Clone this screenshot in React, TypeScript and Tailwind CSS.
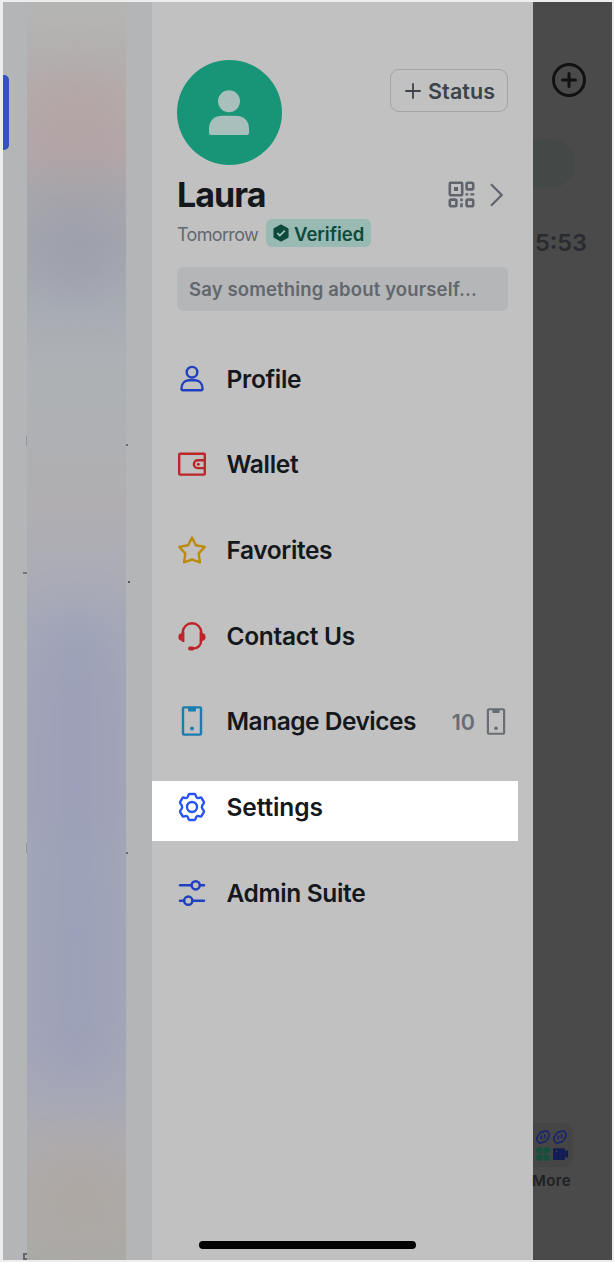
import React from "react";
import clsx from "clsx";

const ProfileIcon = () => (
    <svg className="h-[30px] w-[30px] text-[#1f40c0]" viewBox="0 0 30 30" fill="none" stroke="currentColor" strokeWidth="2.4" strokeLinejoin="round">
        <circle cx="15" cy="8.2" r="5.3" />
        <path d="M4.500 24.800c0-5 2.800-8.500 7.500-8.500h6c4.700 0 7.500 3.500 7.500 8.500 0 1-.4 1.400-1.400 1.400H5.900c-1 0-1.400-.4-1.400-1.400Z" />
    </svg>
);

const WalletIcon = () => (
    <svg className="h-[30px] w-[30px] text-[#bd2529]" viewBox="0 0 30 30" fill="none" stroke="currentColor" strokeWidth="2.4" strokeLinejoin="round">
        <rect x="2.200" y="4.800" width="25.600" height="20.800" rx="0.8" />
        <path d="M27.800 11.300h-7a3.900 3.900 0 0 0 0 7.800h7" />
        <circle cx="21.300" cy="15.200" r="1.500" fill="currentColor" stroke="none" />
    </svg>
);

const StarIcon = () => (
    <svg className="h-[30px] w-[30px] text-[#bd8a0b]" viewBox="0 0 30 30" fill="none" stroke="currentColor" strokeWidth="2.4" strokeLinejoin="round">
        <path d="m15 2.600 3.900 7.600 8.900 1.700-6.100 6.500 1.200 8.900L15 24.500l-7.900 2.800 1.200-8.900-6.100-6.500 8.900-1.700L15 2.600Z" />
    </svg>
);

const HeadsetIcon = () => (
    <svg className="h-[30px] w-[30px] text-[#bd2529]" viewBox="0 0 30 30" fill="none" stroke="currentColor" strokeWidth="2.4">
        <path d="M5.700 19V11.600a9.300 9.300 0 0 1 18.600 0V18.500c0 5.500-3.300 9-8.300 9.100" />
        <path d="M7.400 11H5.800C5 11 4.700 11.500 4.700 12.300c-1.900.2-3.300.8-3.300 3.700s1.400 3.500 3.300 3.700c0 .8.300 1.300 1.100 1.300h1.600ZM22.600 11h1.600c.8 0 1.100.5 1.100 1.300 1.900.2 3.300.8 3.300 3.700s-1.400 3.500-3.300 3.700c0 .8-.3 1.300-1.100 1.300h-1.600Z" fill="currentColor" stroke="none" />
        <path d="M13 27.500h2.500" strokeWidth="3.800" strokeLinecap="round" />
    </svg>
);

const PhoneIcon = ({ className }: { className: string }) => (
    <svg className={className} viewBox="0 0 22 30" fill="none" stroke="currentColor" strokeWidth="2.4">
        <rect x="2" y="1.400" width="18" height="27.200" rx="1" />
        <path d="M7 1.500h8v3.300a.8.8 0 0 1-.8.8H7.800a.8.8 0 0 1-.8-.8Z" fill="currentColor" stroke="none" />
        <circle cx="11" cy="22.600" r="2" fill="currentColor" stroke="none" />
    </svg>
);

const GearIcon = () => (
    <svg className="h-[30px] w-[30px] text-[#2553f5]" viewBox="0 0 30 30" fill="none" stroke="currentColor" strokeWidth="2.4" strokeLinejoin="round">
        <path d="M12.700 2h4.600c.8 0 1.200.4 1.300 1.100.4 2.700 1.800 3.500 4.200 2.500.8-.4 1.400-.2 1.800.5l2.200 3.800c.4.7.3 1.300-.3 1.800-2.200 1.700-2.200 4.900 0 6.600.6.500.7 1.100.3 1.800l-2.200 3.800c-.4.7-1 .9-1.800.5-2.400-1-3.800-.2-4.200 2.500-.1.700-.5 1.100-1.300 1.100h-4.600c-.8 0-1.200-.4-1.300-1.100-.4-2.700-1.800-3.500-4.200-2.500-.8.4-1.400.2-1.800-.5l-2.200-3.800c-.4-.7-.3-1.300.3-1.800 2.200-1.700 2.200-4.900 0-6.600-.6-.5-.7-1.100-.3-1.800l2.200-3.800c.4-.7 1-.9 1.800-.5 2.400 1 3.800.2 4.200-2.500.1-.7.5-1.100 1.300-1.100Z" />
        <circle cx="15" cy="15" r="5" />
    </svg>
);

const SlidersIcon = () => (
    <svg className="h-[30px] w-[30px] text-[#1f40c0]" viewBox="0 0 30 30" fill="none" stroke="currentColor" strokeWidth="2.5" strokeLinecap="round">
        <path d="M3 7.300h11.500M23 7.300h4M3 22.700h4M15.500 22.700H27" />
        <circle cx="18.700" cy="7.300" r="4.100" />
        <circle cx="11.300" cy="22.700" r="4.100" />
    </svg>
);

const QrIcon = () => (
    <svg className="h-[27px] w-[27px] text-[#60656d]" viewBox="0 0 27 27" fill="none" stroke="currentColor" strokeWidth="2.6">
        <rect x="1.800" y="1.800" width="12.400" height="12.400" rx="1" />
        <rect x="18.600" y="1.800" width="6.600" height="6.600" rx="1.500" />
        <rect x="1.800" y="18.600" width="6.600" height="6.600" rx="1.500" />
        <rect x="18.600" y="18.600" width="6.600" height="6.600" rx="1.500" />
        <path d="M6 6h4v4H6ZM17.500 12.200h2.800v2.400h-2.800ZM22.300 12.200h4v2.400h-4ZM12.200 17.500h2.600v2.800h-2.600ZM12.200 22.300h2.600v4h-2.600Z" fill="currentColor" stroke="none" />
    </svg>
);

const LinkIcon = () => (
    <svg className="h-[14px] w-[14px] text-[#17256f]" viewBox="0 0 14 14" fill="none" stroke="currentColor" strokeWidth="1.600">
        <path d="M6.600 12.400c-2 1.100-4.200.5-5.200-1.300-.8-1.300-.8-2.700 0-4.100L2.900 4.300C4 2.300 6 1.400 7.900 2.300" />
        <path d="M7.400 1.600c2-1.100 4.200-.5 5.200 1.300.8 1.300.8 2.700 0 4.100l-1.500 2.700c-1.100 2-3.100 2.900-5 2" />
        <path d="M6 9.300c-1.500-1-1.200-2.400.2-3.600M8 4.700c1.500 1 1.200 2.400-.2 3.600" strokeWidth="1.600" />
    </svg>
);

const items = [
    { title: "Profile", icon: <ProfileIcon />, tracking: "tracking-[-0.3px]" },
    { title: "Wallet", icon: <WalletIcon />, tracking: "tracking-[-0.3px]" },
    { title: "Favorites", icon: <StarIcon />, tracking: "tracking-[-0.4px]" },
    { title: "Contact Us", icon: <HeadsetIcon />, tracking: "tracking-[-0.3px]" },
    { title: "Manage Devices", icon: <PhoneIcon className="h-[30px] w-[22px] text-[#1a7db1]" />, tracking: "tracking-[-0.5px]", count: 10 },
    { title: "Settings", icon: <GearIcon />, tracking: "tracking-[-0.1px]", active: true },
    { title: "Admin Suite", icon: <SlidersIcon />, tracking: "tracking-[-0.35px]" },
];

function Sidebar() {
    return (
        <aside className="relative w-[149px] shrink-0 overflow-hidden bg-[#b3b5b7] pl-6">
            <div className="relative h-full w-[99px] overflow-hidden bg-[linear-gradient(180deg,#b5b5b4_0px,#b3b1b0_45px,#b5aaaa_100px,#b3a7a9_145px,#a9a7ac_185px,#a3a5ae_240px,#a7abb3_300px,#adb1b5_350px,#afb1b4_430px,#b0aeb1_500px,#adadb5_550px,#a5a8b8_630px,#a3a5b8_700px,#a3a4b8_790px,#a2a7b8_860px,#a2a6b9_930px,#a4a6b8_1040px,#a8a9b6_1100px,#aeabae_1145px,#aeaaa7_1190px,#aba9a5_1258px)]">
                <div className="absolute left-4 top-[70px] h-[110px] w-[66px] rounded-full bg-[#b19d9f] opacity-45 blur-[26px]" />
                <div className="absolute left-4 top-[195px] h-[100px] w-[66px] rounded-full bg-[#9598a8] opacity-40 blur-[22px]" />
                <div className="absolute left-6 top-[610px] h-[470px] w-[50px] rounded-full bg-[#929ab8] opacity-50 blur-[22px]" />
                <div className="absolute left-6 top-[1150px] h-[80px] w-[56px] rounded-full bg-[#aca49e] opacity-50 blur-[20px]" />
            </div>
            <span className="absolute left-0 top-[73px] h-[75px] w-1.5 rounded-r-[5px] bg-[#3451c5]" />
            {/* edges of the labels that show around the blurred strip */}
            <span className="absolute left-[23px] top-[434px] h-[10px] w-px bg-[#92959a]" />
            <span className="absolute left-[123px] top-[442px] h-[2px] w-[2px] bg-[#686c72]" />
            <span className="absolute left-[20px] top-[570px] h-[2px] w-[4px] bg-[#73777d]" />
            <span className="absolute left-[125px] top-[579px] h-[2px] w-[2px] bg-[#575a60]" />
            <span className="absolute left-[23px] top-[841px] h-[10px] w-px bg-[#92959a]" />
            <span className="absolute left-[123px] top-[850px] h-[2px] w-[2px] bg-[#686c72]" />
            <span className="absolute left-[20px] top-[1251px] h-[7px] w-[4px] border-l-2 border-t-2 border-[#62666c]" />
            <span className="absolute left-[22px] top-[1256px] h-[2px] w-[2px] bg-[#62666c]" />
        </aside>
    );
}

function Header() {
    return (
        <header className="px-[25px] pt-[58px]">
            <div className="flex items-start justify-between">
                <div className="flex h-[105px] w-[105px] items-center justify-center rounded-full bg-[#189577]">
                    <svg className="mr-px h-[46px] w-[42px] text-[#a9bfbb]" viewBox="0 0 42 46" fill="currentColor">
                        <circle cx="21" cy="11.300" r="11" />
                        <path d="M1 43V38.500C1 30 7 25.700 14.500 25.700h13C35 25.700 41 30 41 38.500V43a2 2 0 0 1-2 2H3a2 2 0 0 1-2-2Z" />
                    </svg>
                </div>
                <button className="mt-[9px] flex h-[43px] w-[118px] items-center gap-[7px] rounded-[9px] border border-[#a3a4a9] pl-[14px] text-[#3d434b]">
                    <svg className="h-4 w-4" viewBox="0 0 16 16" stroke="currentColor" strokeWidth="1.800">
                        <path d="M8 .3v15.400M.3 8h15.400" />
                    </svg>
                    <span className="text-[21.5px] font-semibold leading-6 tracking-[0.1px]">Status</span>
                </button>
            </div>
            <div className="mt-[9px] flex h-[42px] items-center justify-between">
                <h1 className="text-[34px] font-bold leading-[42px] tracking-[-0.95px] text-[#14171b]">Laura</h1>
                <div className="flex items-center gap-[14px] pb-px pr-1">
                    <QrIcon />
                    <svg className="h-6 w-[15px] text-[#60656d]" viewBox="0 0 15 24" fill="none" stroke="currentColor" strokeWidth="2.200">
                        <path d="m2 1.300 10.700 10.700L2 22.700" />
                    </svg>
                </div>
            </div>
            <div className="mt-[3px] flex h-7 items-center gap-2">
                <span className="w-[81px] whitespace-nowrap pt-0.5 text-[18px] tracking-[-0.65px] text-[#646870]">Tomorrow</span>
                <span className="flex h-7 w-[105px] items-center gap-[5px] rounded-md bg-[#99b9b3] pl-[7px] text-[18.500px] font-semibold text-[#0d4a3c]">
                    <svg className="h-[18px] w-4 shrink-0" viewBox="0 0 16 18">
                        <path d="M8 1.200 14.800 5v8L8 16.800 1.200 13V5Z" fill="#0d4a3c" stroke="#0d4a3c" strokeWidth="1.500" strokeLinejoin="round" />
                        <path d="m4.300 9.200 2.500 2.400 5-5" fill="none" stroke="#a5c4be" strokeWidth="1.700" />
                    </svg>
                    <span className="pt-px leading-6">Verified</span>
                </span>
            </div>
            <div className="mt-5 flex h-[44px] items-center rounded-md bg-[#b5b6b8] pl-3 pt-0.5 text-[18.500px] font-semibold tracking-[0.15px] text-[#62666d]">
                Say something about yourself...
            </div>
        </header>
    );
}

function Menu() {
    return (
        <nav className="mt-[41.500px] flex flex-col gap-[25.700px]">
            {items.map((item) => (
                <div key={item.title} className={clsx("flex h-[60px] w-[366px] items-center pb-2 pl-[25px]", item.active && "bg-white")}>
                    <span className="flex w-[30px] justify-center">{item.icon}</span>
                    <span className={clsx("ml-[19.500px] whitespace-nowrap pt-px text-[24.500px] font-semibold text-[#14171b]", item.tracking)}>{item.title}</span>
                    {item.count && (
                        <span className="ml-auto flex items-center gap-[11px] pr-3 text-[21.500px] font-semibold text-[#686c73]">
                            <span className="pt-px">{item.count}</span>
                            <PhoneIcon className="h-[27px] w-5" />
                        </span>
                    )}
                </div>
            ))}
        </nav>
    );
}

function Backdrop() {
    return (
        <section className="flex w-[79px] shrink-0 flex-col bg-[#4a4a4a]">
            <svg className="ml-[17.500px] mt-[60px] h-9 w-9 shrink-0 text-[#101113]" viewBox="0 0 36 36" fill="none" stroke="currentColor" strokeWidth="3" strokeLinecap="round">
                <circle cx="18" cy="18" r="15.500" />
                <path d="M18 11.500v13M11.500 18h13" />
            </svg>
            <div className="mt-[41px] h-[49px] w-[42px] shrink-0 rounded-r-full bg-[#444847]" />
            <p className="ml-[2px] mt-10 text-[23.500px] font-semibold leading-[30px] text-[#292b2e]">5:53</p>
            <div className="mt-auto grid h-[44px] w-10 shrink-0 grid-cols-[14px_15px] content-center gap-x-[3px] gap-y-[3px] rounded-r-[10px] bg-[#454545] pl-[2.500px]">
                <LinkIcon />
                <LinkIcon />
                <svg className="h-[14px] w-[14px] text-[#16503d]" viewBox="0 0 14 14" fill="currentColor">
                    <path d="M3.200 0a3.200 3.200 0 0 1 3.300 3.300v2.200a1 1 0 0 1-1 1H3.200A3.200 3.200 0 0 1 3.200 0ZM10.800 0a3.200 3.200 0 0 0-3.300 3.300v2.200a1 1 0 0 0 1 1h2.300a3.200 3.200 0 0 0 0-6.500ZM3.200 14a3.200 3.200 0 0 0 3.300-3.300V8.500a1 1 0 0 0-1-1H3.200a3.200 3.200 0 0 0 0 6.500ZM10.800 14a3.200 3.200 0 0 1-3.300-3.300V8.500a1 1 0 0 1 1-1h2.300a3.200 3.200 0 0 1 0 6.500Z" />
                </svg>
                <svg className="h-[14px] w-[15px] text-[#131d55]" viewBox="0 0 15 14" fill="currentColor">
                    <path fillRule="evenodd" d="M1 1.200h10a1 1 0 0 1 1 1v2.300l3-1.700v8.500l-3-1.700V12a1 1 0 0 1-1 1H1a1 1 0 0 1-1-1V2.200a1 1 0 0 1 1-1ZM2.800 3.700v1.600h1.700V3.700Z" />
                </svg>
            </div>
            <p className="-ml-px mb-[69px] mt-1 text-[15px] font-semibold leading-5 tracking-[0.4px] text-[#202123]">More</p>
        </section>
    );
}

export default function App() {
    return (
        <div className="h-[1262px] w-[614px] bg-[#ededed] pb-[2px] pl-[3px] pr-[2px] pt-[2px] font-['Inter',sans-serif]">
            <div className="flex h-full overflow-hidden">
                <Sidebar />
                <main className="flex w-[381px] shrink-0 flex-col bg-[#c1c1c1]">
                    <Header />
                    <Menu />
                    <div className="mb-[11px] ml-[47px] mt-auto h-2 w-[217px] rounded-full bg-black" />
                </main>
                <Backdrop />
            </div>
        </div>
    );
}
